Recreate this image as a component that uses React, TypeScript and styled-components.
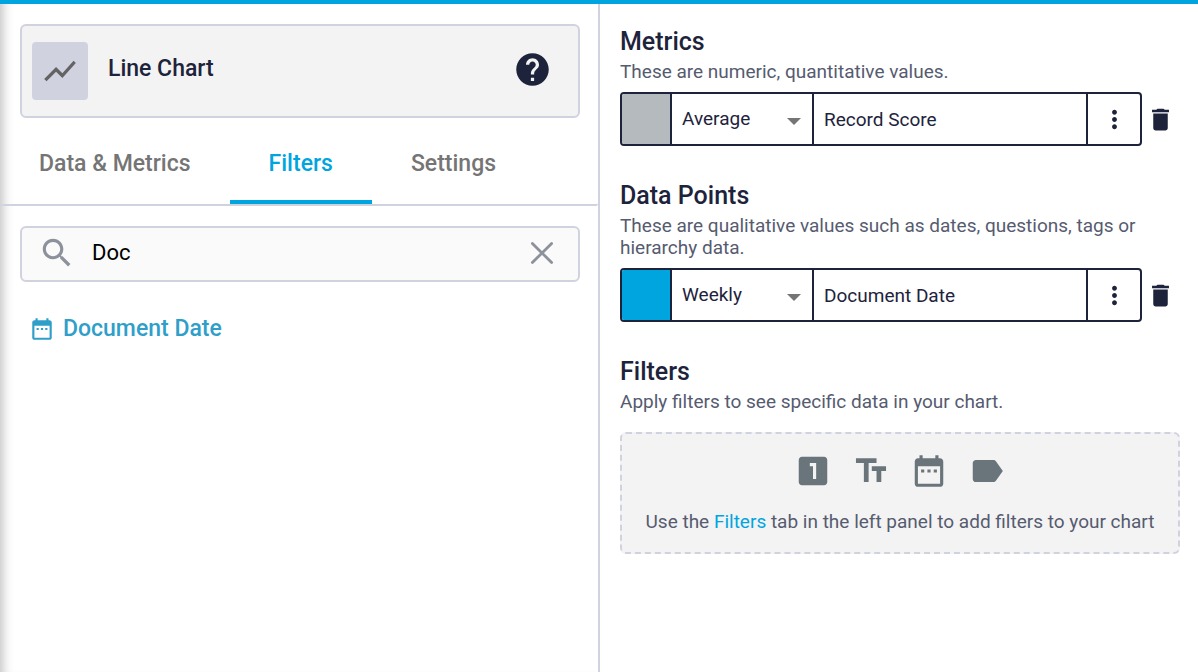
import React, { useState } from "react";
import styled, { createGlobalStyle } from "styled-components";

const color = {
  accent: "#00a5df",
  link: "#2f9fca",
  ink: "#1e233c",
  text: "#565b70",
  muted: "#757575",
  line: "#d0d2e0",
  panel: "#f3f3f3",
  field: "#fafafa",
  fieldIcon: "#8c919b",
  hintIcon: "#6a757b",
};

const GlobalStyle = createGlobalStyle`
  *, *::before, *::after { box-sizing: border-box; }
  body {
    margin: 0;
    background: #fff;
    color: ${color.ink};
    font-family: Roboto, "Liberation Sans", sans-serif;
    font-size: 19px;
    line-height: 22px;
  }
  button, input, select { font: inherit; color: inherit; margin: 0; }
`;

const paths = {
  lineChart: "M3.5 18.49l6-6.01 4 4L22 6.92l-1.41-1.41-7.09 7.97-4-4L2 16.99z",
  help: "M12 2C6.48 2 2 6.48 2 12s4.48 10 10 10 10-4.48 10-10S17.52 2 12 2zm1 17h-2v-2h2v2zm2.07-7.75l-.9.92C13.45 12.9 13 13.5 13 15h-2v-.5c0-1.1.45-2.1 1.17-2.83l1.24-1.26c.37-.36.59-.86.59-1.41 0-1.1-.9-2-2-2s-2 .9-2 2H8c0-2.21 1.79-4 4-4s4 1.79 4 4c0 .88-.36 1.68-.93 2.25z",
  search: "M15.5 14h-.79l-.28-.27C15.41 12.59 16 11.11 16 9.5 16 5.91 13.09 3 9.5 3S3 5.91 3 9.5 5.91 16 9.5 16c1.61 0 3.09-.59 4.23-1.57l.27.28v.79l5 4.99L20.49 19l-4.99-5zm-6 0C7.01 14 5 11.99 5 9.5S7.01 5 9.5 5 14 7.01 14 9.5 11.99 14 9.5 14z",
  calendar: "M9 11H7v2h2v-2zm4 0h-2v2h2v-2zm4 0h-2v2h2v-2zm2-7h-1V2h-2v2H8V2H6v2H5c-1.11 0-1.99.9-1.99 2L3 20c0 1.1.89 2 2 2h14c1.1 0 2-.9 2-2V6c0-1.1-.9-2-2-2zm0 16H5V9h14v11z",
  more: "M12 8c1.1 0 2-.9 2-2s-.9-2-2-2-2 .9-2 2 .9 2 2 2zm0 2c-1.1 0-2 .9-2 2s.9 2 2 2 2-.9 2-2-.9-2-2-2zm0 6c-1.1 0-2 .9-2 2s.9 2 2 2 2-.9 2-2-.9-2-2-2z",
  trash: "M6 19c0 1.1.9 2 2 2h8c1.1 0 2-.9 2-2V7H6v12zM19 4h-3.5l-1-1h-5l-1 1H5v2h14V4z",
  number: "M19 3H5c-1.1 0-2 .9-2 2v14c0 1.1.9 2 2 2h14c1.1 0 2-.9 2-2V5c0-1.1-.9-2-2-2zm-5 14h-2V9h-2V7h4v10z",
  textSize: "M2.5 4v3h5v12h3V7h5V4h-13zm19 5h-9v3h3v7h3v-7h3V9z",
  tag: "M17.63 5.84C17.27 5.33 16.67 5 16 5L5 5.01C3.9 5.01 3 5.9 3 7v10c0 1.1.9 1.99 2 1.99L16 19c.67 0 1.27-.33 1.63-.84L22 12l-4.37-6.16z",
};

const Svg = styled.svg`
  display: block;
  flex: none;
  fill: currentColor;
`;

function Icon({ name, size }: { name: keyof typeof paths; size: number }) {
  return (
    <Svg width={size} height={size} viewBox="0 0 24 24" aria-hidden="true">
      <path d={paths[name]} />
    </Svg>
  );
}

const Page = styled.div`
  display: grid;
  grid-template-columns: minmax(0, 300fr) minmax(0, 299fr);
  min-height: 100vh;
  border-top: 4px solid ${color.accent};
`;

const Sidebar = styled.aside`
  border-right: 2px solid ${color.line};
  box-shadow: inset 12px 0 12px -10px rgba(0, 0, 0, 0.28);
`;

const ChartCard = styled.div`
  display: flex;
  align-items: center;
  gap: 20px;
  margin: 20px 18px 0 20px;
  padding: 16px 26px 16px 10px;
  border: 2px solid ${color.line};
  border-radius: 6px;
  background: ${color.panel};
`;

const ChartThumb = styled.div`
  display: grid;
  place-items: center;
  width: 56px;
  height: 58px;
  border-radius: 4px;
  background: ${color.line};
  color: #636363;
`;

const ChartName = styled.h1`
  flex: 1;
  margin: 0;
  font-size: 23px;
  line-height: 26px;
  font-weight: 500;
`;

const IconButton = styled.button`
  display: grid;
  place-items: center;
  flex: none;
  padding: 0;
  border: 0;
  background: none;
  cursor: pointer;
`;

const CardTop = styled.div`
  display: flex;
  flex: 1;
  align-items: center;
  padding-bottom: 4px;
`;

const Tabs = styled.div`
  display: flex;
  margin-top: 6px;
  border-bottom: 2px solid ${color.line};
  border-radius: 2px;
`;

const Tab = styled.button<{ $active: boolean }>`
  height: 80px;
  padding: 4px 39px 0;
  border: 0;
  border-bottom: 4px solid ${(p) => (p.$active ? color.accent : "transparent")};
  background: none;
  color: ${(p) => (p.$active ? color.accent : color.muted)};
  font-size: 23px;
  font-weight: 500;
  cursor: pointer;
`;

const SearchBox = styled.label`
  display: flex;
  align-items: center;
  height: 56px;
  margin: 20px 18px 0 20px;
  padding: 0 24px 2px 16px;
  border: 2px solid ${color.line};
  border-radius: 6px;
  background: ${color.field};
  color: ${color.fieldIcon};
`;

const SearchInput = styled.input`
  flex: 1;
  min-width: 0;
  margin-left: 16px;
  padding: 0;
  border: 0;
  outline: 0;
  background: none;
  color: #000;
  font-size: 22px;
  line-height: 26px;
`;

const Results = styled.ul`
  margin: 34px 20px 0 29px;
  padding: 0;
  list-style: none;
`;

const ResultLink = styled.a`
  display: inline-flex;
  align-items: center;
  gap: 8px;
  color: ${color.link};
  font-size: 23px;
  line-height: 26px;
  font-weight: 500;
  text-decoration: none;
`;

const Main = styled.main`
  display: flex;
  flex-direction: column;
  gap: 34px;
  padding: 22px 18px 20px 20px;
`;

const Heading = styled.h2`
  margin: 0 0 3px;
  font-size: 25px;
  line-height: 32px;
  font-weight: 500;
`;

const Description = styled.p`
  margin: 0;
  color: ${color.text};
`;

const FieldRow = styled.div`
  display: flex;
  align-items: center;
  gap: 2px;
  margin-top: 9px;
  padding-right: 4px;
`;

const FieldBox = styled.div`
  display: grid;
  grid-template-columns: 50px 142px minmax(0, 1fr) 52px;
  flex: 1;
  height: 54px;
  overflow: hidden;
  border: 2px solid ${color.ink};
  border-radius: 4px;

  & > :not(:last-child) {
    border-right: 2px solid ${color.ink};
  }
`;

const Swatch = styled.div<{ $fill: string }>`
  background: ${(p) => p.$fill};
`;

const SelectCell = styled.div`
  display: grid;
  align-items: center;

  & > * {
    grid-area: 1 / 1;
  }
`;

const Select = styled.select`
  appearance: none;
  width: 100%;
  height: 100%;
  padding: 0 32px 0 10px;
  border: 0;
  background: none;
  cursor: pointer;
`;

const Caret = styled.svg`
  justify-self: end;
  margin: 5px 11px 0 0;
  fill: ${color.muted};
  pointer-events: none;
`;

const FieldName = styled.div`
  display: flex;
  align-items: center;
  padding: 2px 10px 0;
`;

const DeleteButton = styled(IconButton)`
  width: 32px;
  height: 40px;
`;

const EmptyFilters = styled.div`
  margin-top: 19px;
  padding: 18px 20px 19px;
  border: 2px dashed ${color.line};
  border-radius: 6px;
  background: ${color.panel};
  color: ${color.text};
  text-align: center;
`;

const HintIcons = styled.div`
  display: flex;
  justify-content: center;
  gap: 20px;
  margin-bottom: 21px;
  color: ${color.hintIcon};
`;

const HintLink = styled.a`
  color: ${color.accent};
  text-decoration: none;
`;

interface FieldProps {
  fill: string;
  label: string;
  options: string[];
  name: string;
}

function Field({ fill, label, options, name }: FieldProps) {
  return (
    <FieldRow>
      <FieldBox>
        <Swatch $fill={fill} />
        <SelectCell>
          <Select aria-label={label}>
            {options.map((o) => (
              <option key={o}>{o}</option>
            ))}
          </Select>
          <Caret width="14" height="7" viewBox="0 0 14 7" aria-hidden="true">
            <path d="M0 0h14L7 7z" />
          </Caret>
        </SelectCell>
        <FieldName>{name}</FieldName>
        <IconButton type="button" aria-label={`${name} options`}>
          <Icon name="more" size={29} />
        </IconButton>
      </FieldBox>
      <DeleteButton type="button" aria-label={`Remove ${name}`}>
        <Icon name="trash" size={29} />
      </DeleteButton>
    </FieldRow>
  );
}

const tabs = ["Data & Metrics", "Filters", "Settings"];

export default function App() {
  const [tab, setTab] = useState("Filters");
  const [query, setQuery] = useState("Doc");

  return (
    <>
      <GlobalStyle />
      <Page>
        <Sidebar>
          <ChartCard>
            <ChartThumb>
              <Icon name="lineChart" size={38} />
            </ChartThumb>
            <CardTop>
              <ChartName>Line Chart</ChartName>
              <IconButton type="button" aria-label="Help">
                <Icon name="help" size={39} />
              </IconButton>
            </CardTop>
          </ChartCard>
          <Tabs role="tablist">
            {tabs.map((t) => (
              <Tab
                key={t}
                type="button"
                role="tab"
                aria-selected={t === tab}
                $active={t === tab}
                onClick={() => setTab(t)}
              >
                {t}
              </Tab>
            ))}
          </Tabs>
          <SearchBox>
            <Icon name="search" size={38} />
            <SearchInput
              type="text"
              aria-label="Search fields"
              value={query}
              onChange={(e) => setQuery(e.target.value)}
            />
            <IconButton type="button" aria-label="Clear search" onClick={() => setQuery("")}>
              <Svg width="24" height="24" viewBox="0 0 24 24" aria-hidden="true">
                <path
                  d="M2.4 2.4l19.2 19.2M21.6 2.4L2.4 21.6"
                  stroke="currentColor"
                  strokeWidth="2.8"
                  strokeLinecap="round"
                />
              </Svg>
            </IconButton>
          </SearchBox>
          <Results>
            <li>
              <ResultLink href="#document-date">
                <Icon name="calendar" size={26} />
                Document Date
              </ResultLink>
            </li>
          </Results>
        </Sidebar>
        <Main>
          <section>
            <Heading>Metrics</Heading>
            <Description>These are numeric, quantitative values.</Description>
            <Field
              fill="#b4babe"
              label="Aggregation"
              options={["Average", "Sum", "Count"]}
              name="Record Score"
            />
          </section>
          <section>
            <Heading>Data Points</Heading>
            <Description>
              These are qualitative values such as dates, questions, tags or hierarchy data.
            </Description>
            <Field
              fill={color.accent}
              label="Interval"
              options={["Weekly", "Daily", "Monthly"]}
              name="Document Date"
            />
          </section>
          <section>
            <Heading>Filters</Heading>
            <Description>Apply filters to see specific data in your chart.</Description>
            <EmptyFilters>
              <HintIcons>
                <Icon name="number" size={38} />
                <Icon name="textSize" size={38} />
                <Icon name="calendar" size={38} />
                <Icon name="tag" size={38} />
              </HintIcons>
              Use the <HintLink href="#filters">Filters</HintLink> tab in the left panel to add
              filters to your chart
            </EmptyFilters>
          </section>
        </Main>
      </Page>
    </>
  );
}
